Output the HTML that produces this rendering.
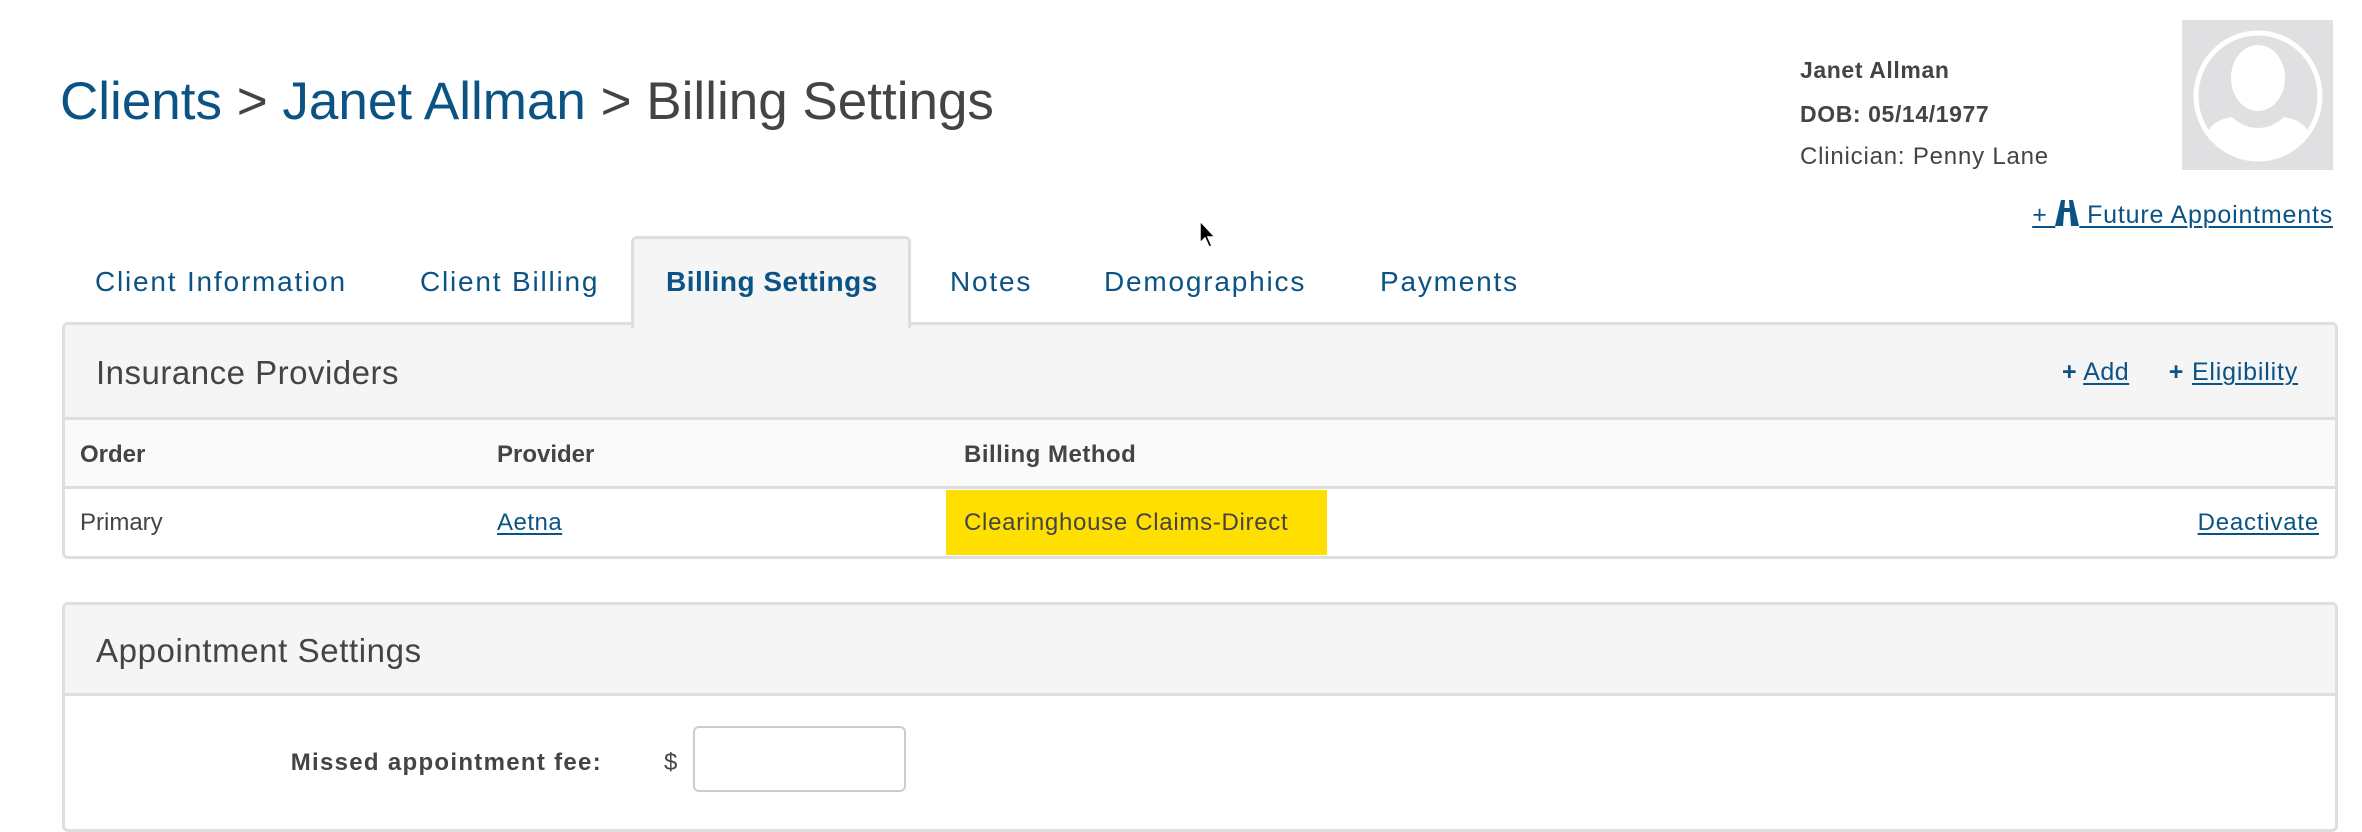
<!DOCTYPE html>
<html><head><meta charset="utf-8"><style>
*{box-sizing:border-box;margin:0;padding:0}
body{width:2362px;height:804px;overflow:hidden;background:#fff;font-family:"Liberation Sans",sans-serif;color:#444;position:relative}
.a{position:absolute;white-space:nowrap}
.blue{color:#0b5384}
u{text-decoration:underline;text-decoration-thickness:2px;text-underline-offset:3px}
.panel{position:absolute;left:62px;width:2276px;border:3px solid #dedede;border-radius:6px;background:#fff;overflow:hidden}
.tab{font-size:28px;line-height:36px;letter-spacing:1.8px}
</style></head><body>
<div class="a" style="left:60px;top:67px;font-size:53px;line-height:70px"><span class="blue">Clients</span> &gt; <span class="blue">Janet Allman</span> &gt; Billing Settings</div>

<div class="a" style="left:1800px;top:55px;font-size:23px;font-weight:bold;line-height:30px;letter-spacing:0.6px">Janet Allman</div>
<div class="a" style="left:1800px;top:99px;font-size:23px;font-weight:bold;line-height:30px;letter-spacing:0.6px">DOB: 05/14/1977</div>
<div class="a" style="left:1800px;top:142px;font-size:24px;line-height:30px;letter-spacing:0.8px">Clinician: Penny Lane</div>
<div class="a" style="left:2182px;top:20px;width:151px;height:150px;background:#e0e0e3">
<svg width="151" height="150" viewBox="0 0 151 150">
<defs><clipPath id="c"><ellipse cx="76" cy="76" rx="60" ry="61"/></clipPath></defs>
<ellipse cx="76" cy="76" rx="62" ry="63" fill="none" stroke="#fff" stroke-width="5"/>
<g clip-path="url(#c)">
<ellipse cx="76" cy="58" rx="27" ry="33" fill="#fff"/>
<path d="M20 140 L24 115 Q30 100 50 97 Q62 108 76 108 Q90 108 102 97 Q122 100 128 115 L132 140Z" fill="#fff"/>
</g></svg></div>

<div class="a blue" style="right:29px;top:199px;font-size:25px;line-height:32px;letter-spacing:0.8px"><u>+ <svg width="24" height="26" viewBox="0 0 24 26" style="vertical-align:-3px"><path d="M6 0 L10 0 L8 26 L0 26Z M14 0 L18 0 L24 26 L16 26Z M8 8 L16 8 L16 12 L8 12Z" fill="#0b5384"/></svg> Future Appointments</u></div>

<svg class="a" style="left:1198px;top:219px" width="22" height="32" viewBox="0 0 22 32"><path d="M2 2 L2 24 L7 19 L11 28 L14 27 L10 18 L17 18 Z" fill="#000" stroke="#fff" stroke-width="1.5"/></svg>

<div class="a" style="left:631px;top:236px;width:280px;height:92px;border:3px solid #dedede;border-bottom:none;border-radius:6px 6px 0 0;background:#f5f5f5;z-index:2"></div>
<div class="a blue tab" style="left:95px;top:264px">Client Information</div>
<div class="a blue tab" style="left:420px;top:264px">Client Billing</div>
<div class="a blue tab" style="left:666px;top:264px;font-weight:bold;z-index:3;letter-spacing:0.5px">Billing Settings</div>
<div class="a blue tab" style="left:950px;top:264px">Notes</div>
<div class="a blue tab" style="left:1104px;top:264px">Demographics</div>
<div class="a blue tab" style="left:1380px;top:264px">Payments</div>

<div class="panel" style="top:322px;height:237px">
 <div style="position:absolute;left:0;top:0;right:0;height:95px;background:#f5f5f5;border-bottom:3px solid #dedede"></div>
 <div class="a" style="left:31px;top:27px;font-size:33px;line-height:42px;letter-spacing:0.5px">Insurance Providers</div>
 <div class="a blue" style="left:1997px;top:31px;font-size:25px;line-height:32px;letter-spacing:0.5px"><b>+</b> <u>Add</u></div>
 <div class="a blue" style="right:37px;top:31px;font-size:25px;line-height:32px;letter-spacing:0.8px"><b>+</b> <u>Eligibility</u></div>
 <div style="position:absolute;left:0;top:95px;right:0;height:69px;background:#fafafa;border-bottom:3px solid #dedede"></div>
 <div class="a" style="left:15px;top:115px;font-size:24px;font-weight:bold;line-height:30px">Order</div>
 <div class="a" style="left:432px;top:115px;font-size:24px;font-weight:bold;line-height:30px">Provider</div>
 <div class="a" style="left:899px;top:115px;font-size:24px;font-weight:bold;line-height:30px;letter-spacing:0.5px">Billing Method</div>
 <div class="a" style="left:881px;top:165px;width:381px;height:65px;background:#ffdf00"></div>
 <div class="a" style="left:15px;top:183px;font-size:24px;line-height:30px">Primary</div>
 <div class="a blue" style="left:432px;top:183px;font-size:24px;line-height:30px;letter-spacing:0.5px"><u>Aetna</u></div>
 <div class="a" style="left:899px;top:183px;font-size:24px;line-height:30px;letter-spacing:0.7px">Clearinghouse Claims-Direct</div>
 <div class="a blue" style="right:16px;top:183px;font-size:24px;line-height:30px;letter-spacing:0.8px"><u>Deactivate</u></div>
</div>

<div class="panel" style="top:602px;height:230px">
 <div style="position:absolute;left:0;top:0;right:0;height:91px;background:#f5f5f5;border-bottom:3px solid #dedede"></div>
 <div class="a" style="left:31px;top:25px;font-size:33px;line-height:42px;letter-spacing:0.6px">Appointment Settings</div>
 <div class="a" style="right:1733px;top:143px;font-size:24px;font-weight:bold;line-height:30px;letter-spacing:1.3px">Missed appointment fee:</div>
 <div class="a" style="left:599px;top:143px;font-size:24px;line-height:30px">$</div>
 <div class="a" style="left:628px;top:121px;width:213px;height:66px;border:2px solid #ccc;border-radius:6px;background:#fff"></div>
</div>
</body></html>
